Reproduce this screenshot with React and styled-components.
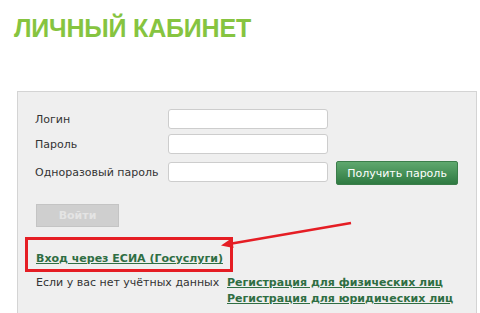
import React from 'react';
import styled, { createGlobalStyle } from 'styled-components';

const Global = createGlobalStyle`
html, body {
    margin: 0;
    padding: 0;
    background: #fff;
}
body {
    width: 480px;
    height: 313px;
    overflow: hidden;
    font-family: 'DejaVu Sans', Verdana, sans-serif;
}
`;

const Page = styled.div`
position: relative;
height: 313px;
overflow: hidden;
padding-top: 15px;
box-sizing: border-box;
`;

const Title = styled.h1`
margin: 0 0 0 14px;
font-family: 'Liberation Sans', Arial, sans-serif;
font-weight: 700;
font-size: 25px;
line-height: 26px;
color: #86c440;
letter-spacing: -0.2px;
`;

const Panel = styled.div`
margin: 50px 0 0 17px;
width: 458px;
height: 205px;
background: #efefef;
border: 1px solid #d4d4d4;
border-bottom: none;
padding-top: 17px;
`;

const Form = styled.div`
display: grid;
grid-template-columns: 125px 160px auto;
column-gap: 8px;
row-gap: 5px;
align-items: center;
padding-left: 17px;
`;

const Label = styled.label`
font-size: 11px;
color: #333;
`;

const Input = styled.input`
width: 160px;
height: 20px;
box-sizing: border-box;
border: 1px solid #cdcdcd;
border-radius: 3px;
background: #fff;
margin: 0;
`;

const GreenButton = styled.button`
width: 122px;
height: 24px;
border: 1px solid #3b7d4a;
border-radius: 2px;
background: linear-gradient(#5fa86e, #2f7a42);
color: #fff;
font-family: 'DejaVu Sans', Verdana, sans-serif;
font-size: 11px;
padding: 0;
margin-top: 2px;
`;

const GrayButton = styled.button`
display: block;
width: 83px;
height: 23px;
margin: 19px 0 0 18px;
border: 1px solid #c4c4c4;
background: #cfcfcf;
color: #e4e4e4;
font-family: 'DejaVu Sans', Verdana, sans-serif;
font-weight: 700;
font-size: 11px;
padding: 0;
`;

const Highlight = styled.div`
width: 202px;
height: 29px;
margin: 10px 0 0 7px;
border: 3px solid #e51d24;
display: flex;
align-items: flex-end;
`;

const Link = styled.a`
font-size: 11px;
font-weight: 700;
color: #2f6e43;
text-decoration: underline;
white-space: nowrap;
`;

const EsiaLink = styled(Link)`
margin: 0 0 4px 8px;
`;

const Register = styled.div`
display: grid;
grid-template-columns: 191px auto;
margin: 3px 0 0 18px;
font-size: 11px;
line-height: 16px;
color: #333;
`;

const RegLinks = styled.div`
display: flex;
flex-direction: column;
`;

const Arrow = styled.svg`
position: absolute;
left: 215px;
top: 218px;
`;

export default function App() {
    return (
        <Page>
            <Global />
            <Title>ЛИЧНЫЙ КАБИНЕТ</Title>
            <Panel>
                <Form>
                    <Label>Логин</Label>
                    <Input />
                    <span />
                    <Label>Пароль</Label>
                    <Input type="password" />
                    <span />
                    <Label>Одноразовый пароль</Label>
                    <Input />
                    <GreenButton>Получить пароль</GreenButton>
                </Form>
                <GrayButton>Войти</GrayButton>
                <Highlight>
                    <EsiaLink href="#">Вход через ЕСИА (Госуслуги)</EsiaLink>
                </Highlight>
                <Register>
                    <span>Если у вас нет учётных данных</span>
                    <RegLinks>
                        <Link href="#">Регистрация для физических лиц</Link>
                        <Link href="#">Регистрация для юридических лиц</Link>
                    </RegLinks>
                </Register>
            </Panel>
            <Arrow width="140" height="32" viewBox="0 0 140 32">
                <line x1="136" y1="5" x2="14" y2="26" stroke="#e51d24" strokeWidth="2.5" />
                <polygon points="6,27.5 17,20 18.5,30" fill="#e51d24" />
            </Arrow>
        </Page>
    );
}
